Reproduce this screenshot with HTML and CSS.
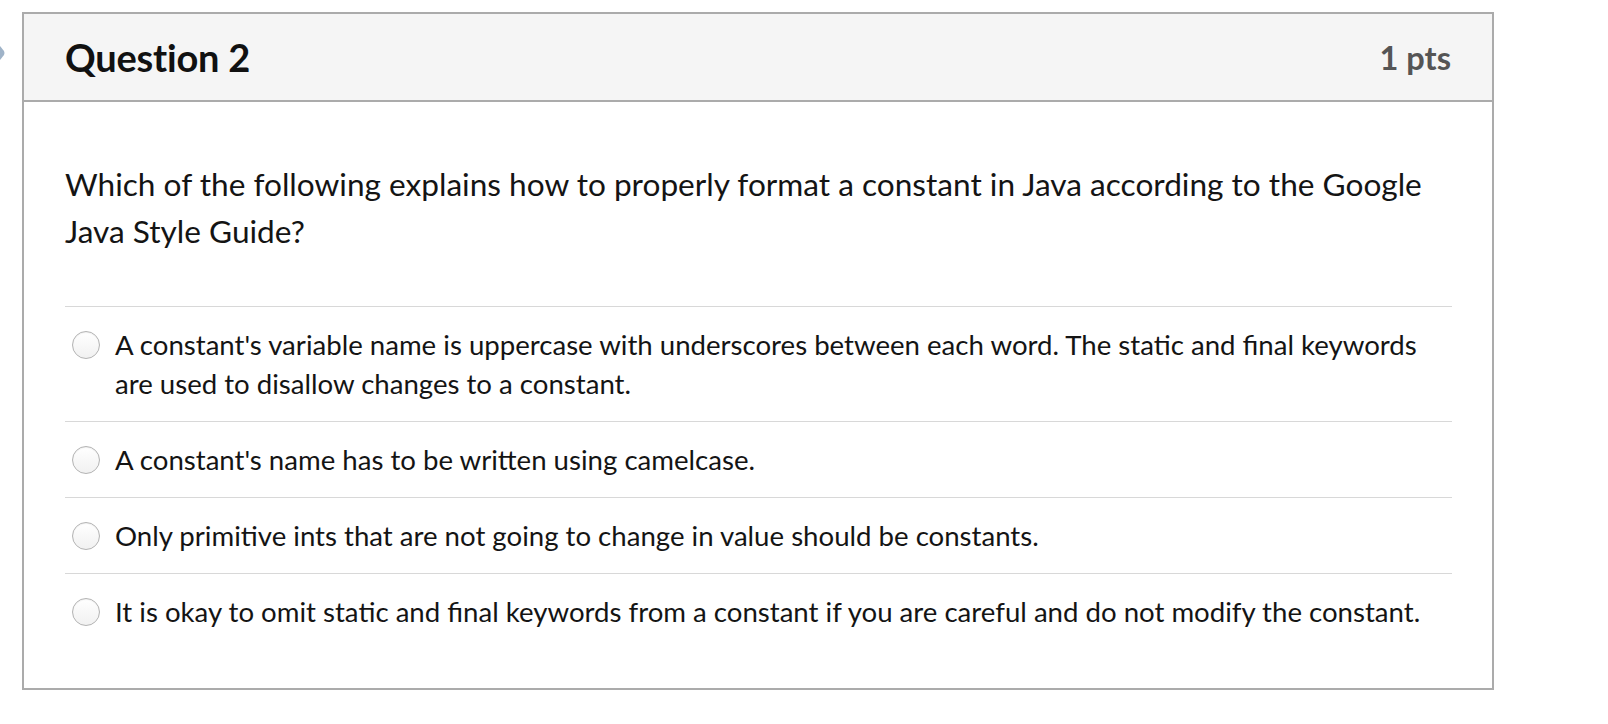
FILE: index.html
```html
<!DOCTYPE html>
<html lang="en">
<head>
<meta charset="utf-8">
<title>Question 2</title>
<link rel="stylesheet" href="styles.css">
</head>
<body>
<div class="page">
  <svg class="flag" width="6" height="14" viewBox="0 0 6 14" aria-hidden="true"><path d="M0 0 L4 5 Q5 7 4 9 L0 14 Z" fill="#9fb3c8"/></svg>
  <div class="question">
    <div class="q-header">
      <h2 class="q-title">Question 2</h2>
      <span class="q-points">1 pts</span>
    </div>
    <div class="q-body">
      <p class="q-text">Which of the following explains how to properly format a constant in Java according to the Google Java Style Guide?</p>
      <div class="answers">
        <label class="answer"><span class="radio"></span><span class="a-text">A constant's variable name is uppercase with underscores between each word. The static and final keywords are used to disallow changes to a constant.</span></label>
        <label class="answer"><span class="radio"></span><span class="a-text">A constant's name has to be written using camelcase.</span></label>
        <label class="answer"><span class="radio"></span><span class="a-text">Only primitive ints that are not going to change in value should be constants.</span></label>
        <label class="answer"><span class="radio"></span><span class="a-text">It is okay to omit static and final keywords from a constant if you are careful and do not modify the constant.</span></label>
      </div>
    </div>
  </div>
</div>
</body>
</html>
```
FILE: styles.css
```css
html, body {
  margin: 0;
  padding: 0;
  background: #ffffff;
}
body {
  font-family: "Lato", "Liberation Sans", sans-serif;
  color: #141414;
}
.page {
  position: relative;
  padding: 12px 0 0 22px;
}
.flag {
  position: absolute;
  left: 0;
  top: 46px;
}
.question {
  width: 1472px;
  box-sizing: border-box;
  border: 2px solid #ababab;
  background: #fff;
}
.q-header {
  display: flex;
  align-items: center;
  justify-content: space-between;
  height: 86px;
  padding: 0 41px 0 41px;
  background: #f5f5f5;
  border-bottom: 2px solid #ababab;
}
.q-title {
  margin: 0;
  font-size: 38px;
  font-weight: 700;
  color: #111;
  letter-spacing: -0.2px;
}
.q-points {
  font-size: 32.6px;
  font-weight: 700;
  color: #555;
}
.q-body {
  padding: 59px 40px 39px 41px;
}
.q-text {
  margin: 0 0 51px 0;
  font-size: 31.6px;
  line-height: 47px;
}
.answer {
  display: flex;
  align-items: flex-start;
  gap: 15px;
  padding: 18px 0 18px 7px;
  border-top: 1px solid #d8d8d8;
  font-size: 27.6px;
  line-height: 39px;
}
.radio {
  flex: 0 0 auto;
  width: 26px;
  height: 26px;
  margin-top: 6px;
  border: 1px solid #b3b3b3;
  border-radius: 50%;
  background: linear-gradient(#ffffff, #f1f1f1);
  box-shadow: inset 0 1px 1px rgba(0,0,0,0.06);
}
.a-text {
  flex: 1 1 auto;
}
```
